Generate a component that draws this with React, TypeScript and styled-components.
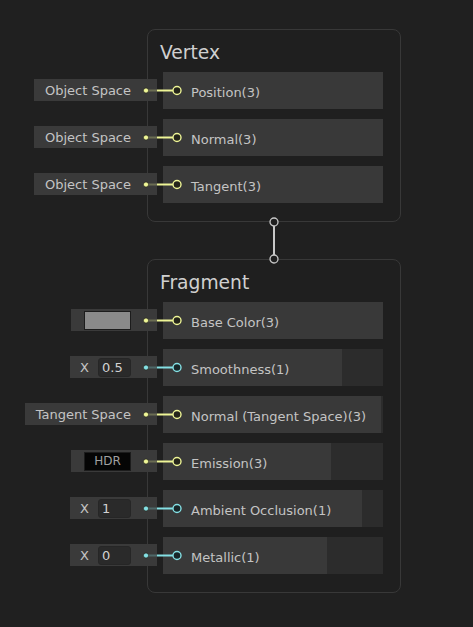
import React from "react";
import styled, { createGlobalStyle } from "styled-components";

const GlobalStyle = createGlobalStyle`
  html, body {
    margin: 0;
    padding: 0;
    background: #202020;
  }
  body {
    font-family: "DejaVu Sans", Verdana, sans-serif;
    color: #c4c4c4;
  }
`;

type PortKind = "v3" | "v1";

const PORT_COLORS: Record<PortKind, { line: string; dim: string; fill: string }> = {
  v3: { line: "#eef596", dim: "rgba(238,245,150,0.28)", fill: "#24241a" },
  v1: { line: "#84e0e4", dim: "rgba(132,224,228,0.28)", fill: "#182628" },
};

const Canvas = styled.div`
  width: 473px;
  height: 627px;
  box-sizing: border-box;
  padding: 29px 0 0 147px;
  display: flex;
  flex-direction: column;
  overflow: hidden;
`;

const Node = styled.div`
  width: 254px;
  box-sizing: border-box;
  border: 1px solid #383838;
  border-radius: 8px;
  background: #1f1f1f;
`;

const Title = styled.div`
  height: 42px;
  box-sizing: border-box;
  padding: 12px 0 0 12px;
  font-size: 18.7px;
  line-height: 22px;
  color: #d0d0d0;
`;

const BlockList = styled.div`
  display: flex;
  flex-direction: column;
  gap: 10px;
  padding: 0 17px 18px 15px;
`;

const Block = styled.div`
  position: relative;
  height: 37px;
  display: flex;
  background: #2c2c2c;
`;

const BlockBody = styled.div<{ $width: number }>`
  width: ${({ $width }) => $width}px;
  box-sizing: border-box;
  padding: 4px 0 0 28px;
  display: flex;
  align-items: center;
  background: #393939;
  font-size: 13px;
  color: #c4c4c4;
  white-space: nowrap;
`;

const Drawer = styled.div<{ $pad: number }>`
  position: absolute;
  right: calc(100% + 6px);
  top: 7px;
  height: 22px;
  box-sizing: border-box;
  padding: 0 26px 0 ${({ $pad }) => $pad}px;
  display: flex;
  align-items: center;
  gap: 9px;
  background: #3a3a3a;
  font-size: 13px;
  color: #c4c4c4;
  white-space: nowrap;
`;

const Swatch = styled.div<{ $dark?: boolean }>`
  width: 47px;
  height: 19px;
  box-sizing: border-box;
  border: 1px solid #1c1c1c;
  background: ${({ $dark }) => ($dark ? "#050505" : "#8a8a8a")};
  display: flex;
  align-items: center;
  justify-content: center;
  font-size: 12px;
  color: #a0a0a0;
`;

const AxisLabel = styled.span`
  width: 9px;
`;

const NumberField = styled.div`
  width: 33px;
  height: 19px;
  box-sizing: border-box;
  border: 1px solid #262626;
  border-radius: 3px;
  background: #2a2a2a;
  padding-left: 3px;
  display: flex;
  align-items: center;
  font-size: 13px;
  color: #d2d2d2;
`;

const WireSvg = styled.svg`
  position: absolute;
  left: -20px;
  top: 0;
  z-index: 2;
  overflow: visible;
`;

const LinkArea = styled.div`
  position: relative;
  z-index: 2;
  width: 254px;
  height: 37px;
  display: flex;
  justify-content: center;
`;

function Wire({ kind }: { kind: PortKind }) {
  const c = PORT_COLORS[kind];
  return (
    <WireSvg width={40} height={37} viewBox="0 0 40 37">
      <line x1={3} y1={18.5} x2={14} y2={18.5} stroke={c.dim} strokeWidth={2} />
      <line x1={14} y1={18.5} x2={30} y2={18.5} stroke={c.line} strokeWidth={2} />
      <circle cx={34} cy={18.5} r={4} fill={c.fill} stroke={c.line} strokeWidth={1.4} />
      <circle cx={3} cy={18.5} r={2.6} fill={c.line} stroke="#2a2a22" strokeWidth={0.8} />
    </WireSvg>
  );
}

type Control =
  | { type: "space"; label: string }
  | { type: "color" }
  | { type: "hdr" }
  | { type: "number"; value: string };

interface BlockSpec {
  name: string;
  kind: PortKind;
  width: number;
  control: Control;
}

function ControlDrawer({ control }: { control: Control }) {
  switch (control.type) {
    case "space":
      return <Drawer $pad={11}>{control.label}</Drawer>;
    case "color":
      return (
        <Drawer $pad={13}>
          <Swatch />
        </Drawer>
      );
    case "hdr":
      return (
        <Drawer $pad={13}>
          <Swatch $dark>HDR</Swatch>
        </Drawer>
      );
    case "number":
      return (
        <Drawer $pad={10}>
          <AxisLabel>X</AxisLabel>
          <NumberField>{control.value}</NumberField>
        </Drawer>
      );
  }
}

function BlockRow({ spec }: { spec: BlockSpec }) {
  return (
    <Block>
      <ControlDrawer control={spec.control} />
      <Wire kind={spec.kind} />
      <BlockBody $width={spec.width}>{spec.name}</BlockBody>
    </Block>
  );
}

const vertexBlocks: BlockSpec[] = [
  { name: "Position(3)", kind: "v3", width: 220, control: { type: "space", label: "Object Space" } },
  { name: "Normal(3)", kind: "v3", width: 220, control: { type: "space", label: "Object Space" } },
  { name: "Tangent(3)", kind: "v3", width: 220, control: { type: "space", label: "Object Space" } },
];

const fragmentBlocks: BlockSpec[] = [
  { name: "Base Color(3)", kind: "v3", width: 220, control: { type: "color" } },
  { name: "Smoothness(1)", kind: "v1", width: 179, control: { type: "number", value: "0.5" } },
  { name: "Normal (Tangent Space)(3)", kind: "v3", width: 218, control: { type: "space", label: "Tangent Space" } },
  { name: "Emission(3)", kind: "v3", width: 168, control: { type: "hdr" } },
  { name: "Ambient Occlusion(1)", kind: "v1", width: 199, control: { type: "number", value: "1" } },
  { name: "Metallic(1)", kind: "v1", width: 164, control: { type: "number", value: "0" } },
];

function StackNode({ title, blocks }: { title: string; blocks: BlockSpec[] }) {
  return (
    <Node>
      <Title>{title}</Title>
      <BlockList>
        {blocks.map((b) => (
          <BlockRow key={b.name} spec={b} />
        ))}
      </BlockList>
    </Node>
  );
}

function Link() {
  return (
    <LinkArea>
      <svg width={10} height={37} viewBox="0 0 10 37" style={{ overflow: "visible" }}>
        <line x1={5} y1={4} x2={5} y2={33} stroke="#c8c8c8" strokeWidth={2} />
        <circle cx={5} cy={0} r={4} fill="#1f1f1f" stroke="#c8c8c8" strokeWidth={1.3} />
        <circle cx={5} cy={37} r={4} fill="#1f1f1f" stroke="#c8c8c8" strokeWidth={1.3} />
      </svg>
    </LinkArea>
  );
}

export default function App() {
  return (
    <>
      <GlobalStyle />
      <Canvas>
        <StackNode title="Vertex" blocks={vertexBlocks} />
        <Link />
        <StackNode title="Fragment" blocks={fragmentBlocks} />
      </Canvas>
    </>
  );
}
